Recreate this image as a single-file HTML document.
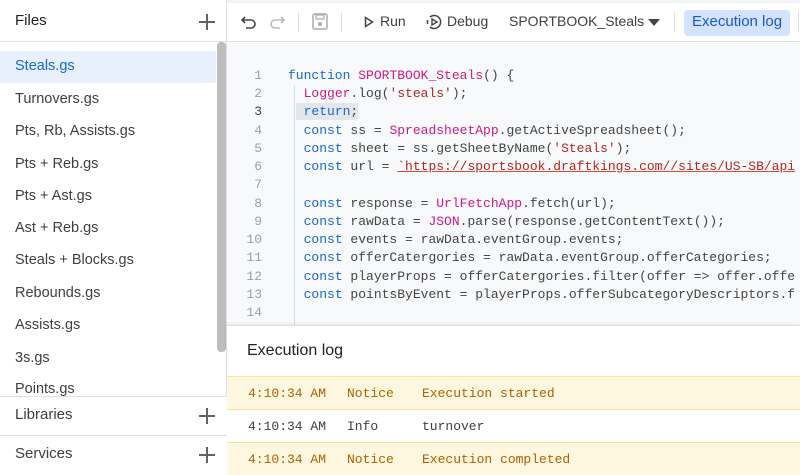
<!DOCTYPE html>
<html><head><meta charset="utf-8"><style>
*{margin:0;padding:0;box-sizing:border-box}
body{width:800px;height:475px;overflow:hidden;background:#fff;font-family:"Liberation Sans",sans-serif;position:relative;color:#202124}
.a{position:absolute}
.side{left:0;top:0;width:227px;height:475px;background:#fff;border-right:1px solid #e0e0e0}
.item{position:absolute;left:15px;font-size:14.5px;color:#3c4043}
.plus{position:absolute;width:16px;height:16px}
.plus:before,.plus:after{content:"";position:absolute;background:#5f6368}
.plus:before{left:7px;top:0;width:2px;height:16px}
.plus:after{top:7px;left:0;height:2px;width:16px}
.mono{font-family:"Liberation Mono",monospace;font-size:13px;white-space:pre}
.ln{position:absolute;width:36px;text-align:right;left:226px;color:#9aa0a6}
.cl{position:absolute;left:288px;color:#444}
.k{color:#1967d2}.p{color:#d01884}.s{color:#b3261e}
.log{position:absolute;left:227px;width:573px;height:33px;font-family:"Liberation Mono",monospace;font-size:13px}
.log span{position:absolute;top:9px}
</style></head><body>
<div class="a" style="left:0;top:0;width:800px;height:42px;border-bottom:1px solid #e0e0e0;background:#fff"></div>
<div class="a" style="left:0;top:0;width:800px;height:3px;background:#f1f3f4"></div>
<div class="a side"></div>
<div class="a" style="left:0;top:0;width:227px;height:42px;border-bottom:1px solid #e0e0e0"></div>
<div class="item" style="top:12px;font-size:15px;color:#202124">Files</div>
<div class="plus" style="left:199px;top:14px"></div>
<div class="a" style="left:0;top:51px;width:216px;height:32px;background:#e8f0fe"></div>
<div class="item" style="top:58px;color:#1967d2">Steals.gs</div>
<div class="item" style="top:91px">Turnovers.gs</div>
<div class="item" style="top:123px">Pts, Rb, Assists.gs</div>
<div class="item" style="top:156px">Pts + Reb.gs</div>
<div class="item" style="top:188px">Pts + Ast.gs</div>
<div class="item" style="top:220px">Ast + Reb.gs</div>
<div class="item" style="top:252px">Steals + Blocks.gs</div>
<div class="item" style="top:285px">Rebounds.gs</div>
<div class="item" style="top:317px">Assists.gs</div>
<div class="item" style="top:350px">3s.gs</div>
<div class="item" style="top:381px">Points.gs</div>
<div class="a" style="left:217px;top:42px;width:9px;height:310px;background:#bdbdbd;border-radius:4px"></div>
<div class="a" style="left:0;top:396px;width:227px;height:79px;background:#fff;border-top:1px solid #e0e0e0"></div>
<div class="a" style="left:0;top:435px;width:227px;height:1px;background:#e0e0e0"></div>
<div class="item" style="top:406px;font-size:15px">Libraries</div>
<div class="plus" style="left:199px;top:408px"></div>
<div class="item" style="top:445px;font-size:15px">Services</div>
<div class="plus" style="left:199px;top:447px"></div>

<svg class="a" style="left:240px;top:14px" width="18" height="16" viewBox="0 0 18 16"><path d="M5 3 L2 6 L5 9 M2 6 H11 A4 4 0 0 1 11 14 H6" fill="none" stroke="#444" stroke-width="1.6"/></svg>
<svg class="a" style="left:268px;top:14px" width="18" height="16" viewBox="0 0 18 16"><path d="M13 3 L16 6 L13 9 M16 6 H7 A4 4 0 0 0 7 14 H12" fill="none" stroke="#bbb" stroke-width="1.6"/></svg>
<div class="a" style="left:298px;top:12px;width:1px;height:20px;background:#e0e0e0"></div>
<svg class="a" style="left:312px;top:13px" width="16" height="17" viewBox="0 0 16 17"><rect x="1" y="1" width="14" height="15" rx="1.5" fill="none" stroke="#aaa" stroke-width="1.5"/><rect x="4" y="2" width="8" height="4" fill="none" stroke="#aaa" stroke-width="1.2"/><circle cx="8" cy="11" r="2" fill="#aaa"/></svg>
<div class="a" style="left:341px;top:12px;width:1px;height:20px;background:#e0e0e0"></div>
<svg class="a" style="left:364px;top:16px" width="10" height="12" viewBox="0 0 10 12"><path d="M1.5 1.5 L8.5 6 L1.5 10.5 Z" fill="none" stroke="#444" stroke-width="1.5"/></svg>
<div class="a" style="left:380px;top:13px;font-size:14px;color:#3c4043">Run</div>
<svg class="a" style="left:426px;top:14px" width="16" height="16" viewBox="0 0 16 16"><path d="M4 3 A6.5 6.5 0 1 1 4 13" fill="none" stroke="#444" stroke-width="1.5"/><path d="M6 5 L11 8 L6 11 Z" fill="none" stroke="#444" stroke-width="1.4"/><path d="M1.5 6 V10" stroke="#444" stroke-width="1.5"/></svg>
<div class="a" style="left:447px;top:13px;font-size:14px;color:#3c4043">Debug</div>
<div class="a" style="left:509px;top:13px;font-size:14px;color:#3c4043">SPORTBOOK_Steals</div>
<svg class="a" style="left:648px;top:19px" width="12" height="7"><path d="M0 0 H12 L6 7 Z" fill="#444"/></svg>
<div class="a" style="left:674px;top:12px;width:1px;height:20px;background:#e0e0e0"></div>
<div class="a" style="left:684px;top:10px;width:106px;height:26px;background:#d3e3fd;border-radius:4px"></div>
<div class="a" style="left:692px;top:13px;font-size:15px;color:#1a57c4">Execution log</div>
<div class="a" style="left:798px;top:12px;width:1px;height:20px;background:#e0e0e0"></div>

<div class="a" style="left:227px;top:43px;width:573px;height:283px;background:#f8f9fa"></div>
<div class="a" style="left:294px;top:85px;width:1px;height:241px;background:#dadce0"></div>
<div class="a" style="left:296px;top:103px;width:62px;height:17px;background:#e3e7ed;border-radius:2px"></div>
<div class="mono">
<div class="ln" style="top:68px">1</div><div class="cl" style="top:68px"><span class="k">function</span> <span class="p">SPORTBOOK_Steals</span>() {</div>
<div class="ln" style="top:86px">2</div><div class="cl" style="top:86px">  <span class="p">Logger</span>.log(<span class="s">'steals'</span>);</div>
<div class="ln" style="top:104px;color:#3c4043">3</div><div class="cl" style="top:104px">  <span class="k">return</span>;</div>
<div class="ln" style="top:123px">4</div><div class="cl" style="top:123px">  <span class="k">const</span> ss = <span class="p">SpreadsheetApp</span>.getActiveSpreadsheet();</div>
<div class="ln" style="top:141px">5</div><div class="cl" style="top:141px">  <span class="k">const</span> sheet = ss.getSheetByName(<span class="s">'Steals'</span>);</div>
<div class="ln" style="top:159px">6</div><div class="cl" style="top:159px">  <span class="k">const</span> url = <span class="s" style="text-decoration:underline;text-decoration-color:#ea4335">`https://sportsbook.draftkings.com//sites/US-SB/api</span></div>
<div class="ln" style="top:177px">7</div>
<div class="ln" style="top:196px">8</div><div class="cl" style="top:196px">  <span class="k">const</span> response = <span class="p">UrlFetchApp</span>.fetch(url);</div>
<div class="ln" style="top:214px">9</div><div class="cl" style="top:214px">  <span class="k">const</span> rawData = <span class="p">JSON</span>.parse(response.getContentText());</div>
<div class="ln" style="top:232px">10</div><div class="cl" style="top:232px">  <span class="k">const</span> events = rawData.eventGroup.events;</div>
<div class="ln" style="top:250px">11</div><div class="cl" style="top:250px">  <span class="k">const</span> offerCatergories = rawData.eventGroup.offerCategories;</div>
<div class="ln" style="top:269px">12</div><div class="cl" style="top:269px">  <span class="k">const</span> playerProps = offerCatergories.filter(offer => offer.offe</div>
<div class="ln" style="top:287px">13</div><div class="cl" style="top:287px">  <span class="k">const</span> pointsByEvent = playerProps.offerSubcategoryDescriptors.f</div>
<div class="ln" style="top:305px">14</div>
</div>

<div class="a" style="left:227px;top:325px;width:573px;height:51px;background:#fff;border-top:1px solid #e0e0e0;box-shadow:0 -1px 3px rgba(0,0,0,.08)"></div>
<div class="a" style="left:247px;top:342px;font-size:16px;color:#202124">Execution log</div>
<div class="log" style="top:376px;background:#fef7e0;border-top:1px solid #fde293;color:#b06000"><span style="left:21px">4:10:34 AM</span><span style="left:120px">Notice</span><span style="left:195px">Execution started</span></div>
<div class="log" style="top:409px;background:#fff;border-top:1px solid #fde293;color:#3c4043"><span style="left:21px">4:10:34 AM</span><span style="left:120px">Info</span><span style="left:195px">turnover</span></div>
<div class="log" style="top:442px;background:#fef7e0;border-top:1px solid #fde293;color:#b06000"><span style="left:21px">4:10:34 AM</span><span style="left:120px">Notice</span><span style="left:195px">Execution completed</span></div>
</body></html>
